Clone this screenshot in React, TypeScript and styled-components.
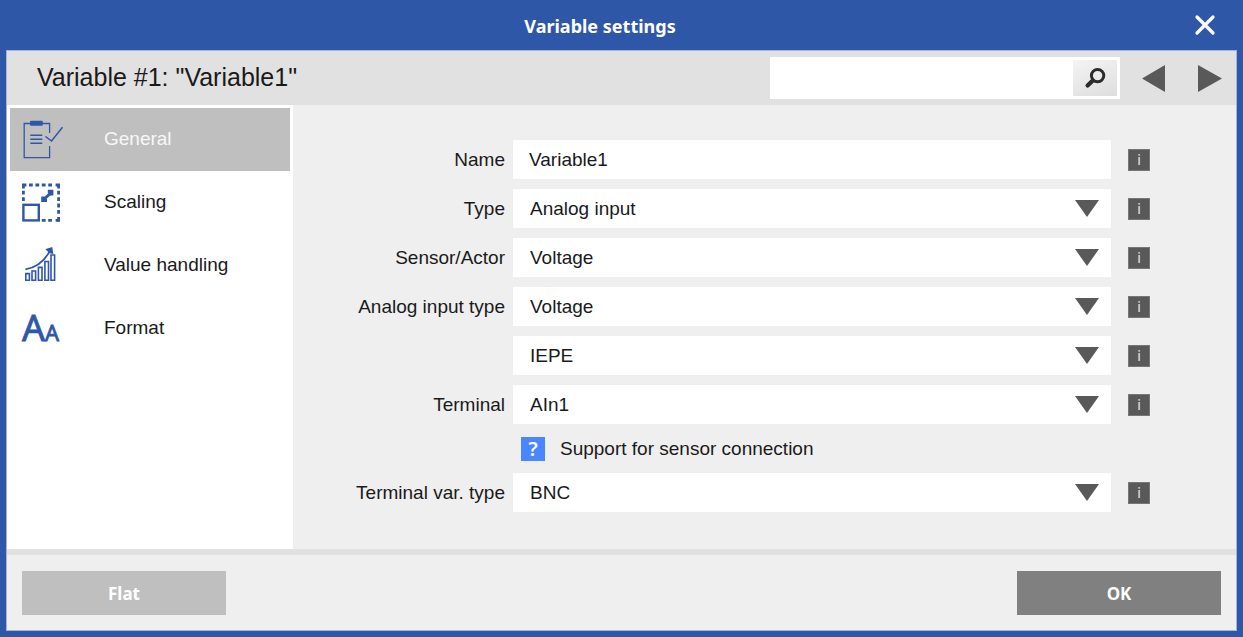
import React from "react";
import styled, { createGlobalStyle } from "styled-components";

const blue = "#2f57a8";
const dark = "#595959";
const sans = '"Liberation Sans", Arial, sans-serif';
const humanist = '"Noto Sans", "Open Sans", sans-serif';

const GlobalStyle = createGlobalStyle`
  * { box-sizing: border-box; }
  body { margin: 0; font-family: ${sans}; font-size: 19px; color: #1a1a1a; }
  button { border: 0; padding: 0; background: none; font: inherit; color: inherit; cursor: pointer; }
`;

const Dialog = styled.div`
  min-height: 100vh;
  display: flex;
  flex-direction: column;
  padding: 0 6px 6px;
  background: ${blue};
`;

const TitleBar = styled.header`
  display: flex;
  align-items: center;
  height: 50px;
  padding-right: 21px;
  color: #fff;
`;

const Title = styled.h1`
  flex: 1;
  margin: 0;
  padding-top: 2px;
  text-align: center;
  font: bold 18px/24px ${humanist};
`;

const IconButton = styled.button`
  display: flex;
  align-items: center;
  justify-content: center;
`;

const Panel = styled.div`
  flex: 1;
  display: flex;
  flex-direction: column;
  border: 1px solid #a3b3d9;
  background: #efefef;
`;

const Header = styled.div`
  display: flex;
  align-items: center;
  height: 54px;
  padding: 0 14px 0 30px;
  background: #e1e1e1;
`;

const Heading = styled.h2`
  flex: 1;
  margin: 0;
  padding-bottom: 2px;
  font-size: 25px;
  font-weight: normal;
  line-height: 30px;
`;

const Search = styled.div`
  display: flex;
  width: 350px;
  height: 42px;
  padding: 3px;
  margin-right: 22px;
  background: #fff;
`;

const SearchInput = styled.input`
  flex: 1;
  min-width: 0;
  border: 0;
  padding: 0 8px;
  outline: 0;
  font: inherit;
  background: transparent;
`;

const SearchButton = styled(IconButton)`
  width: 44px;
  background: linear-gradient(160deg, #f4f4f4, #dedede);
`;

const Pager = styled.div`
  display: flex;
  gap: 33px;
`;

const Body = styled.div`
  flex: 1;
  display: flex;
`;

const Sidebar = styled.nav`
  width: 286px;
  padding: 3px;
  background: #fff;
`;

const Tab = styled.button<{ $active?: boolean }>`
  display: flex;
  align-items: center;
  gap: 40px;
  width: 100%;
  height: 63px;
  padding: 0 10px;
  line-height: 22px;
  background: ${(p) => (p.$active ? "#bfbfbf" : "transparent")};
  color: ${(p) => (p.$active ? "#f7f7f7" : "inherit")};
`;

const TabLabel = styled.span`
  padding-bottom: 2px;
`;

const Form = styled.form`
  flex: 1;
  display: flex;
  flex-direction: column;
  gap: 10px;
  padding: 35px 86px 35px 0;
`;

const Row = styled.div`
  display: grid;
  grid-template-columns: 212px minmax(0, 1fr) 22px;
  column-gap: 8px;
  align-items: center;
`;

const Label = styled.label`
  text-align: right;
  line-height: 22px;
`;

const Control = styled.div`
  position: relative;
  height: 39px;
  margin-right: 9px;
  background: #fff;
`;

const TextInput = styled.input`
  width: 100%;
  height: 100%;
  border: 0;
  padding: 0 16px;
  font: inherit;
  color: inherit;
  background: transparent;
`;

const Select = styled.select`
  appearance: none;
  width: 100%;
  height: 100%;
  border: 0;
  padding: 0 44px 0 17px;
  font: inherit;
  color: inherit;
  background: transparent;
`;

const Arrow = styled.svg`
  position: absolute;
  right: 12px;
  top: 11px;
  pointer-events: none;
`;

const Info = styled.button`
  width: 22px;
  height: 22px;
  border: 1px solid #777;
  background: ${dark};
  color: #e8e8e8;
  font: 14px/18px ${humanist};
`;

const Support = styled.button`
  grid-column: 2;
  display: flex;
  align-items: center;
  gap: 15px;
  height: 29px;
  padding-left: 8px;
  line-height: 22px;
`;

const HelpMark = styled.span`
  width: 24px;
  height: 24px;
  background: #4a86ff;
  color: #fff;
  text-align: center;
  font: 600 20px/24px ${humanist};
`;

const Footer = styled.footer`
  display: flex;
  justify-content: space-between;
  padding: 16px 15px 15px;
  border-top: 6px solid #e1e1e1;
`;

const Action = styled.button<{ $primary?: boolean }>`
  width: 204px;
  height: 44px;
  padding-top: 2px;
  background: ${(p) => (p.$primary ? "#808080" : "#bfbfbf")};
  color: #fff;
  font: bold 17px/24px ${humanist};
`;

const iconProps = {
  width: 44,
  height: 43,
  viewBox: "0 0 44 43",
  fill: "none",
  stroke: blue,
  overflow: "visible",
  "aria-hidden": true,
} as const;

const ClipboardIcon = () => (
  <svg {...iconProps} strokeWidth="1.3">
    <path d="M29.6 15V5.5H4.2v34.2h25.4V28" />
    <path d="M10.3 17.3h12M10.3 21.3h12M10.3 25.3h12" strokeWidth="1.6" />
    <path d="M25.5 18.5l6 4.5L42.5 9.3" strokeWidth="1.5" />
    <rect x="10" y="2.8" width="12.8" height="5" rx="1" fill={blue} stroke="none" />
  </svg>
);

const ScaleIcon = () => (
  <svg {...iconProps} strokeWidth="2.8">
    <path d="M2 4h4.4M9 4h3.8M15.4 4h3.8M21.8 4h3.8M28.2 4h3.8M35.6 4H40" />
    <path d="M3.4 3v4.4M3.4 9.8v3.8M3.4 16.2v3.8" />
    <path d="M38.6 3v4.4M38.6 9.8v3.8M38.6 16.2v3.8M38.6 22.6v3.8M38.6 29v3.8M38.6 36v4.8" />
    <path d="M21.8 39.4h3.8M28.2 39.4h3.8M35.6 39.4h3" />
    <rect x="3.4" y="23.8" width="15.4" height="15.6" strokeWidth="2.4" />
    <path d="M23.5 18.6l8-7.2" strokeWidth="2.8" />
    <path d="M21.2 15.6h3.2l2.6 2.6v2.8h-5.8zM27.8 8.8h5.6v5.6h-3l-2.6-2.8z" fill={blue} stroke="none" />
  </svg>
);

const ChartIcon = () => (
  <svg {...iconProps} strokeWidth="1.6">
    <path d="M5.8 29.6h3.6v6.6H5.8zM12 27h3.6v9.2H12zM18.4 23.4H22v12.8h-3.6zM24.9 17.5h3.6v18.7h-3.6zM31 11h3.6v25.2H31z" />
    <path d="M5.4 25.4C15 23.6 24 18 29.4 7.6" strokeWidth="1.8" />
    <path d="M26.8 5.4l4.8-1.4 .8 5-2.6-.4z" fill={blue} />
  </svg>
);

const FormatIcon = () => (
  <svg {...iconProps} fill={blue} strokeWidth="0.8" fontFamily={humanist}>
    <text x="2" y="34" fontSize="36">A</text>
    <text x="25" y="34" fontSize="22">A</text>
  </svg>
);

const tabs = [
  { label: "General", Icon: ClipboardIcon },
  { label: "Scaling", Icon: ScaleIcon },
  { label: "Value handling", Icon: ChartIcon },
  { label: "Format", Icon: FormatIcon },
];

const InfoButton = ({ about }: { about: string }) => (
  <Info type="button" aria-label={`Info: ${about}`}>i</Info>
);

function SelectRow({ id, label, name, value }: { id: string; label?: string; name?: string; value: string }) {
  return (
    <Row>
      {label ? <Label htmlFor={id}>{label}</Label> : <span />}
      <Control>
        <Select id={id} defaultValue={value} aria-label={label ? undefined : name}>
          <option>{value}</option>
        </Select>
        <Arrow width="24" height="17" viewBox="0 0 24 17" aria-hidden>
          <path d="M0 0h24L12 17z" fill={dark} />
        </Arrow>
      </Control>
      <InfoButton about={label ?? name ?? ""} />
    </Row>
  );
}

export default function App() {
  return (
    <>
      <GlobalStyle />
      <Dialog role="dialog" aria-label="Variable settings">
        <TitleBar>
          <Title>Variable settings</Title>
          <IconButton type="button" aria-label="Close">
            <svg width="22" height="22" viewBox="0 0 22 22" aria-hidden>
              <path d="M3 3l16 16M19 3L3 19" stroke="#fff" strokeWidth="3.2" strokeLinecap="round" />
            </svg>
          </IconButton>
        </TitleBar>
        <Panel>
          <Header>
            <Heading>Variable #1: "Variable1"</Heading>
            <Search>
              <SearchInput type="text" aria-label="Search" />
              <SearchButton type="button" aria-label="Search">
                <svg width="22" height="22" viewBox="0 0 22 22" fill="none" stroke="#2b2b2b" aria-hidden>
                  <circle cx="13.6" cy="8.6" r="6.2" strokeWidth="3" />
                  <path d="M8.8 13.4l-5.2 5.2" strokeWidth="4.2" strokeLinecap="round" />
                </svg>
              </SearchButton>
            </Search>
            <Pager>
              <IconButton type="button" aria-label="Previous variable">
                <svg width="23" height="27" viewBox="0 0 23 27" aria-hidden>
                  <path d="M23 0v27L0 13.5z" fill={dark} />
                </svg>
              </IconButton>
              <IconButton type="button" aria-label="Next variable">
                <svg width="24" height="27" viewBox="0 0 24 27" aria-hidden>
                  <path d="M0 0v27l24-13.5z" fill={dark} />
                </svg>
              </IconButton>
            </Pager>
          </Header>
          <Body>
            <Sidebar>
              {tabs.map(({ label, Icon }, i) => (
                <Tab key={label} type="button" $active={i === 0}>
                  <Icon />
                  <TabLabel>{label}</TabLabel>
                </Tab>
              ))}
            </Sidebar>
            <Form>
              <Row>
                <Label htmlFor="name">Name</Label>
                <Control>
                  <TextInput id="name" type="text" defaultValue="Variable1" />
                </Control>
                <InfoButton about="Name" />
              </Row>
              <SelectRow id="type" label="Type" value="Analog input" />
              <SelectRow id="sensor" label="Sensor/Actor" value="Voltage" />
              <SelectRow id="input-type" label="Analog input type" value="Voltage" />
              <SelectRow id="input-mode" name="Analog input mode" value="IEPE" />
              <SelectRow id="terminal" label="Terminal" value="AIn1" />
              <Row>
                <Support type="button">
                  <HelpMark>?</HelpMark>
                  Support for sensor connection
                </Support>
              </Row>
              <SelectRow id="terminal-type" label="Terminal var. type" value="BNC" />
            </Form>
          </Body>
          <Footer>
            <Action type="button">Flat</Action>
            <Action type="button" $primary>OK</Action>
          </Footer>
        </Panel>
      </Dialog>
    </>
  );
}
